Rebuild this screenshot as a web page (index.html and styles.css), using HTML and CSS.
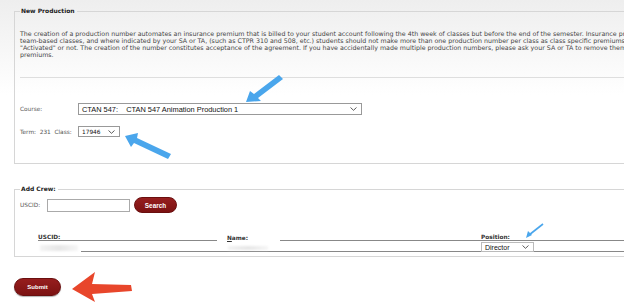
FILE: index.html
```html
<!DOCTYPE html>
<html lang="en">

<head>
  <meta charset="UTF-8" />
  <meta name="viewport" content="width=device-width, initial-scale=1.0" />
  <title>New Production</title>
  <link rel="stylesheet" href="styles.css">
</head>

<body>

  <div class="page">
    <fieldset class="box production">
      <legend>New Production</legend>
      <p class="notice">
        The creation of a production number automates an insurance premium that is billed to your student account following the 4th week of classes but before the end of the semester. Insurance premiums are charged for<br>
        team-based classes, and where indicated by your SA or TA, (such as CTPR 310 and 508, etc.) students should not make more than one production number per class as class specific premiums are charged whether<br>
        "Activated" or not. The creation of the number constitutes acceptance of the agreement. If you have accidentally made multiple production numbers, please ask your SA or TA to remove them or submit a request for<br>
        premiums.
      </p>
      <hr class="divider">

      <div class="field course-row">
        <span class="label">Course:</span>
        <div class="select course-select">
          <span>CTAN 547:&nbsp;&nbsp;&nbsp; CTAN 547 Animation Production 1</span>
          <svg class="chev" width="7" height="4" viewBox="0 0 7 4"><path d="M0.5 0.5 L3.5 3.3 L6.5 0.5" fill="none" stroke="#333" stroke-width="0.8"/></svg>
        </div>
      </div>

      <div class="field term-row">
        <span class="label">Term:&nbsp; 231&nbsp; Class:</span>
        <div class="select class-select">
          <span>17946</span>
          <svg class="chev" width="7" height="4" viewBox="0 0 7 4"><path d="M0.5 0.5 L3.5 3.3 L6.5 0.5" fill="none" stroke="#333" stroke-width="0.8"/></svg>
        </div>
      </div>
    </fieldset>

    <fieldset class="box crew">
      <legend>Add Crew:</legend>
      <div class="search-row">
        <span class="label">USCID:</span>
        <input class="text-input" type="text">
        <button class="btn">Search</button>
      </div>

      <div class="crew-head">
        <span class="col-id">USCID:</span>
        <span class="col-name"><u>N</u>ame:</span>
        <span class="col-line">Position:</span>
      </div>
      <div class="crew-row">
        <span class="blur blur-id"></span>
        <span class="row-line">
          <span class="blur blur-name"></span>
          <span class="select pos-select">
            <span>Director</span>
            <svg class="chev" width="7" height="4" viewBox="0 0 7 4"><path d="M0.5 0.5 L3.5 3.3 L6.5 0.5" fill="none" stroke="#333" stroke-width="0.8"/></svg>
          </span>
        </span>
      </div>
    </fieldset>

    <button class="btn submit">Submit</button>
  </div>

  <!-- annotation arrows drawn over the screenshot -->
  <svg class="marks" width="624" height="304" viewBox="0 0 624 304">
    <g fill="#4aa6ec">
      <path d="M246 102 L250 91 L254 94 L279 75 L283 79 L258 98 L261 101 Z" />
      <path d="M125 136 L138 133 L137 138 L171 154 L168 159 L134 143 L131 147 Z" />
    </g>
    <path d="M543 224 L529 235" stroke="#4aa6ec" stroke-width="1.6" />
    <path d="M526 238 L528 231 L532 235 Z" fill="#4aa6ec" />
    <path d="M72 289 L95 272 L92 284 L131 285 L132 291 L92 294 L95 302 Z" fill="#e8462b" />
  </svg>

</body>

</html>
```

FILE: styles.css
```css
body {
  margin: 0;
  font-family: "DejaVu Sans", Verdana, sans-serif;
  color: #444;
  background: linear-gradient(#eeeeee, #ffffff 95px);
  width: 624px;
  height: 304px;
  overflow: hidden;
  position: relative;
}

.page {
  width: 900px;
  padding: 7px 0 0 14px;
}

.box {
  margin: 0;
  border: 1px solid #d6d6d6;
  border-right: none;
  padding: 0 0 0 5px;
}

.box legend {
  font-size: 6px;
  font-weight: bold;
  color: #222;
  line-height: 8px;
  padding: 0 2px 0 1px;
}

.production {
  height: 155px;
}

.notice {
  margin: 15px 0 0;
  font-size: 6.3px;
  line-height: 7px;
  white-space: nowrap;
  color: #444;
}

.divider {
  margin: 19px 0 0;
  border: none;
  border-top: 1px solid #dedede;
}

.field {
  display: flex;
  align-items: center;
  font-size: 5.8px;
}

.label {
  font-size: 5.8px;
  color: #555;
}

.course-row {
  margin-top: 25px;
}

.course-row .label {
  width: 58px;
}

.term-row {
  margin-top: 11px;
}

.term-row .label {
  width: 58px;
}

.select {
  display: flex;
  align-items: center;
  justify-content: space-between;
  box-sizing: border-box;
  border: 1px solid #999;
  background: #fff;
  color: #111;
  padding: 0 4px 0 3px;
}

.course-select {
  width: 284px;
  height: 12px;
  font-family: "Liberation Sans", Arial, sans-serif;
  font-size: 7.4px;
}

.class-select {
  width: 42px;
  height: 11px;
  font-size: 5.8px;
}

.crew {
  margin-top: 21px;
  height: 70px;
}

.search-row {
  display: flex;
  align-items: center;
  margin-top: 4px;
}

.search-row .label {
  width: 27px;
}

.text-input {
  box-sizing: border-box;
  width: 83px;
  height: 13px;
  margin: 0;
  border: 1px solid #aaa;
  padding: 0;
}

.btn {
  font-family: "Liberation Sans", Arial, sans-serif;
  font-weight: bold;
  color: #fff;
  background: linear-gradient(#961e1e, #7c1212);
  border: 1px solid #6a0f0f;
  border-radius: 9px;
  padding: 0;
  cursor: pointer;
}

.search-row .btn {
  width: 43px;
  height: 16px;
  margin-left: 4px;
  font-size: 6.4px;
}

.crew-head {
  display: flex;
  align-items: flex-end;
  margin-top: 21px;
  font-size: 5.8px;
  font-weight: bold;
  color: #333;
}

.col-id {
  width: 179px;
  margin-left: 18px;
  border-bottom: 1px solid #888;
}

.col-name {
  margin-left: 10px;
  width: 53px;
}

.col-line {
  flex: 1;
  padding-left: 201px;
  border-bottom: 1px solid #888;
}

.crew-row {
  display: flex;
  align-items: flex-end;
  height: 11px;
}

.blur {
  display: block;
  background: linear-gradient(90deg, #f3f3f3, #e6e6e6, #f6f6f6);
  height: 6px;
  filter: blur(1px);
}

.blur-id {
  width: 38px;
  margin-left: 20px;
  margin-bottom: 1px;
}

.row-line {
  flex: 1;
  display: flex;
  align-items: flex-end;
  height: 11px;
  margin-left: 3px;
  border-bottom: 1px solid #888;
}

.blur-name {
  width: 40px;
  height: 4px;
  margin-left: 147px;
  margin-bottom: 1px;
}

.pos-select {
  width: 53px;
  height: 10px;
  margin-left: 213px;
  margin-bottom: -1px;
  font-family: "Liberation Sans", Arial, sans-serif;
  font-size: 7px;
  border-color: #bbb;
}

.submit {
  display: block;
  margin-top: 21px;
  width: 47px;
  height: 18px;
  font-size: 6px;
  border-radius: 9px;
  box-shadow: 0 1px 1px rgba(0, 0, 0, 0.3);
}

.marks {
  position: absolute;
  left: 0;
  top: 0;
  pointer-events: none;
}
```
